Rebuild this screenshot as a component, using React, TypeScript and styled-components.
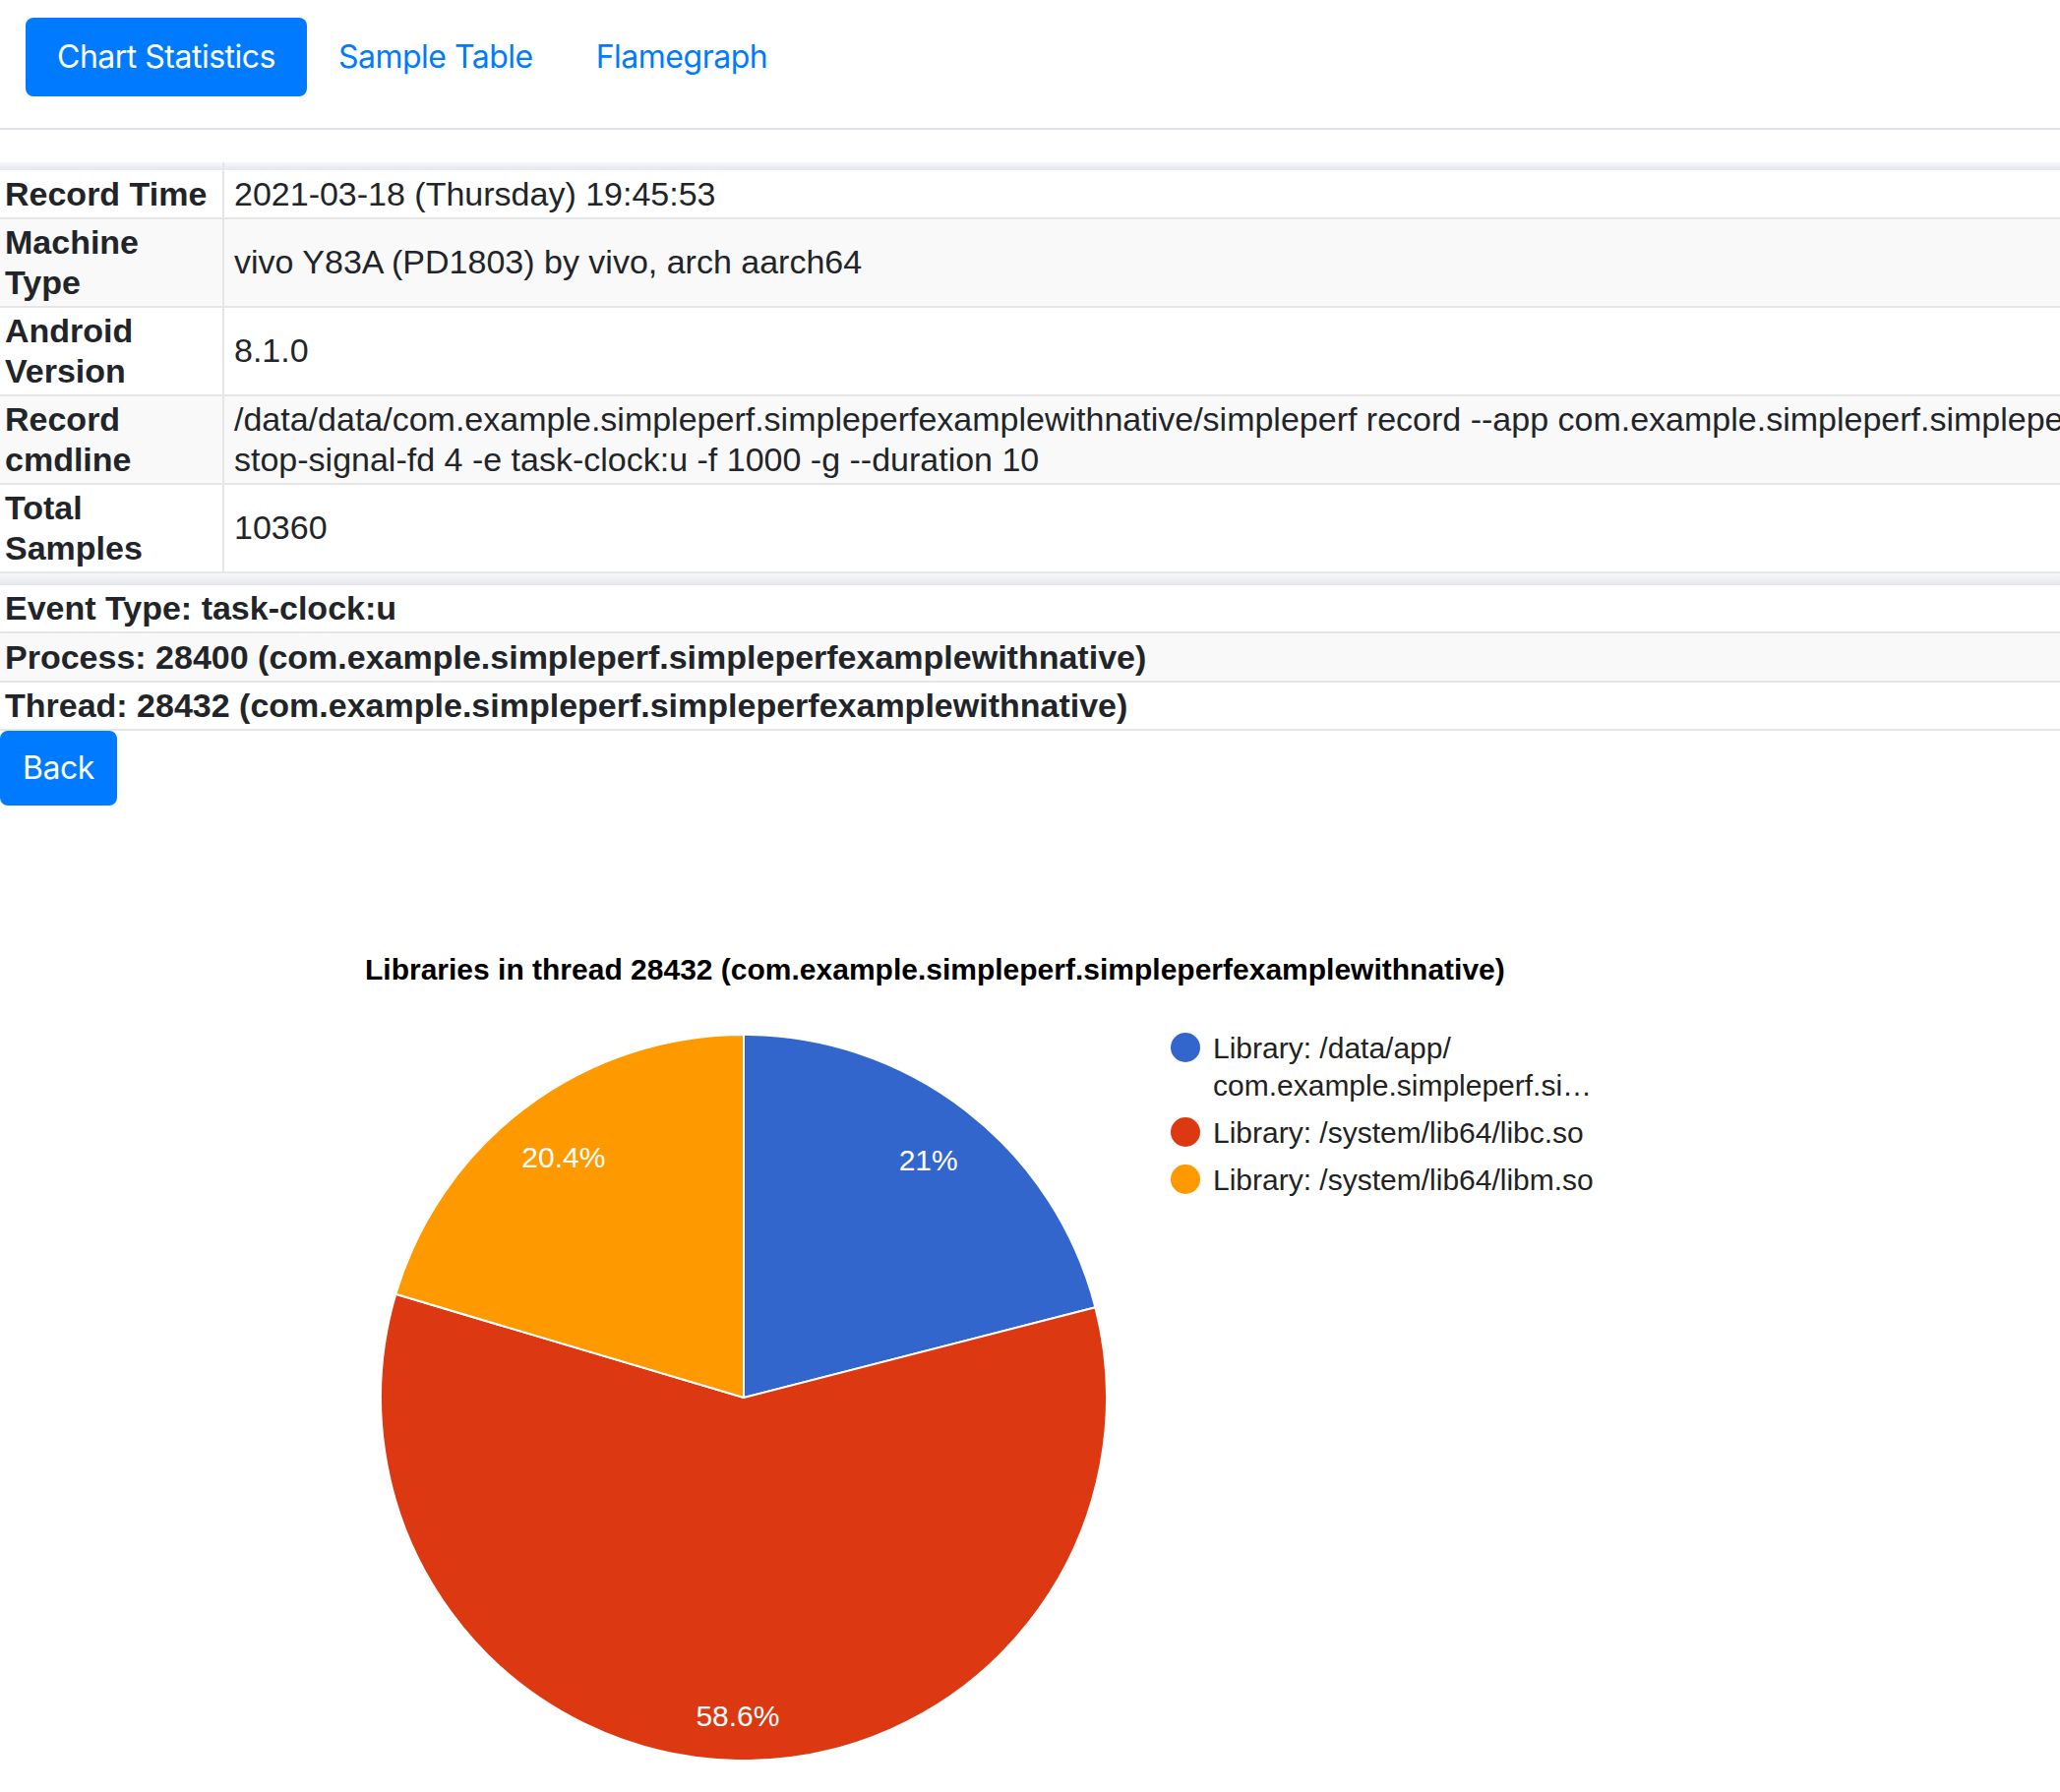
import * as React from 'react'
import styled, { createGlobalStyle } from 'styled-components'

const GlobalStyle = createGlobalStyle`
  body {
    margin: 0;
    background: #fff;
    font-family: "Liberation Sans", Arial, sans-serif;
    color: #212529;
  }
`

const Page = styled.div`
  width: 100%;
  overflow-x: hidden;
`

const Nav = styled.nav`
  display: flex;
  padding: 18px 0 32px 26px;
  border-bottom: 2px solid #dee2e6;
`

const NavLink = styled.a<{ $active?: boolean }>`
  display: block;
  padding: 16px 32px;
  font-family: Inter, "Noto Sans", sans-serif;
  font-size: 32px;
  line-height: 48px;
  letter-spacing: -0.5px;
  border-radius: 8px;
  text-decoration: none;
  cursor: pointer;
  color: ${p => (p.$active ? '#fff' : '#007bff')};
  background: ${p => (p.$active ? '#007bff' : 'transparent')};
`

const InfoTable = styled.table<{ $gap?: number }>`
  border-collapse: collapse;
  table-layout: fixed;
  width: 100%;
  margin-top: ${p => p.$gap || 0}px;
  font-size: 34px;
  color: #212529;
`

const Band = styled.th<{ $divider?: boolean; $tall?: boolean }>`
  height: ${p => (p.$tall ? 12 : 8)}px;
  padding: 0;
  background: linear-gradient(#f7f8fa, #e3e6eb);
  border-right: ${p => (p.$divider ? '2px solid #e6e6e6' : 'none')};
`

const Row = styled.tr`
  border-bottom: 2px solid #e6e6e6;
  &:nth-child(even) {
    background: #f9f9f9;
  }
`

const Key = styled.th`
  padding: 3.5px 0 3.5px 5px;
  text-align: left;
  vertical-align: middle;
  font-weight: 700;
  line-height: 40.5px;
  border-right: 2px solid #e6e6e6;
`

const Value = styled.td`
  padding: 3.5px 0 3.5px 10px;
  vertical-align: middle;
  line-height: 40.5px;
  white-space: nowrap;
`

const Heading = styled.td`
  padding: 3.5px 0 3.5px 5px;
  font-weight: 700;
  line-height: 40.5px;
  white-space: nowrap;
`

const BackButton = styled.button`
  display: block;
  margin: 0;
  padding: 12px 21px;
  font-family: Inter, "Noto Sans", sans-serif;
  font-size: 32px;
  line-height: 48px;
  letter-spacing: -0.5px;
  color: #fff;
  background: #007bff;
  border: 2px solid #007bff;
  border-radius: 8px;
  cursor: pointer;
`

const ChartBox = styled.div`
  height: 1003px;
`

const ChartSvg = styled.svg`
  display: block;
  font-family: "Liberation Sans", Arial, sans-serif;
`

const info: { key: string; value: React.ReactNode }[] = [
  { key: 'Record Time', value: '2021-03-18 (Thursday) 19:45:53' },
  { key: 'Machine Type', value: 'vivo Y83A (PD1803) by vivo, arch aarch64' },
  { key: 'Android Version', value: '8.1.0' },
  {
    key: 'Record cmdline',
    value: (
      <>
        /data/data/com.example.simpleperf.simpleperfexamplewithnative/simpleperf record --app
        com.example.simpleperf.simpleperfexamplewithnative --log info --log-to-android-buffer
        --out-fd 3 --
        <br />
        stop-signal-fd 4 -e task-clock:u -f 1000 -g --duration 10
      </>
    ),
  },
  { key: 'Total Samples', value: '10360' },
]

const headings = [
  'Event Type: task-clock:u',
  'Process: 28400 (com.example.simpleperf.simpleperfexamplewithnative)',
  'Thread: 28432 (com.example.simpleperf.simpleperfexamplewithnative)',
]

interface ISlice {
  legend: string[]
  pct: number
  color: string
  labelR: number
}

const slices: ISlice[] = [
  { legend: ['Library: /data/app/', 'com.example.simpleperf.si…'], pct: 21, color: '#3366cc', labelR: 0.83 },
  { legend: ['Library: /system/lib64/libc.so'], pct: 58.6, color: '#dc3912', labelR: 0.875 },
  { legend: ['Library: /system/lib64/libm.so'], pct: 20.4, color: '#ff9900', labelR: 0.83 },
]

const CX = 756
const CY = 602
const R = 369

const polar = (deg: number, r: number) => {
  const a = (deg * Math.PI) / 180
  return [CX + r * Math.sin(a), CY - r * Math.cos(a)]
}

const PieChart: React.FC = () => {
  let start = 0
  const parts = slices.map(s => {
    const sweep = (s.pct / 100) * 360
    const end = start + sweep
    const [x1, y1] = polar(start, R)
    const [x2, y2] = polar(end, R)
    const [lx, ly] = polar(start + sweep / 2, R * s.labelR)
    const d = `M${CX},${CY} L${x1},${y1} A${R},${R} 0 ${sweep > 180 ? 1 : 0} 1 ${x2},${y2} Z`
    start = end
    return { ...s, d, lx, ly }
  })

  let legendY = 257
  return (
    <ChartSvg width="100%" height={1003}>
      <text x={371} y={177} fontSize={30} fontWeight={700} fill="#000">
        Libraries in thread 28432 (com.example.simpleperf.simpleperfexamplewithnative)
      </text>
      {parts.map(p => (
        <path key={p.color} d={p.d} fill={p.color} stroke="#fff" strokeWidth={2} />
      ))}
      {parts.map(p => (
        <text key={p.color} x={p.lx} y={p.ly + 11} fontSize={30} fill="#fff" textAnchor="middle">
          {p.pct}%
        </text>
      ))}
      {parts.map(p => {
        const y = legendY
        legendY += 48 + (p.legend.length - 1) * 38
        return (
          <g key={p.color}>
            <circle cx={1205} cy={y - 11} r={15} fill={p.color} />
            <text x={1233} y={y} fontSize={30} fill="#222">
              {p.legend.map((line, i) => (
                <tspan key={i} x={1233} dy={i === 0 ? 0 : 38}>
                  {line}
                </tspan>
              ))}
            </text>
          </g>
        )
      })}
    </ChartSvg>
  )
}

const App: React.FC = () => {
  return (
    <Page>
      <GlobalStyle />
      <Nav>
        <NavLink $active>Chart Statistics</NavLink>
        <NavLink>Sample Table</NavLink>
        <NavLink>Flamegraph</NavLink>
      </Nav>
      <InfoTable $gap={33}>
        <colgroup>
          <col width={227} />
          <col />
        </colgroup>
        <thead>
          <tr>
            <Band $divider />
            <Band />
          </tr>
        </thead>
        <tbody>
          {info.map(item => (
            <Row key={item.key}>
              <Key>{item.key}</Key>
              <Value>{item.value}</Value>
            </Row>
          ))}
        </tbody>
      </InfoTable>
      <InfoTable>
        <thead>
          <tr>
            <Band $tall />
          </tr>
        </thead>
        <tbody>
          {headings.map(h => (
            <Row key={h}>
              <Heading>{h}</Heading>
            </Row>
          ))}
        </tbody>
      </InfoTable>
      <BackButton>Back</BackButton>
      <ChartBox>
        <PieChart />
      </ChartBox>
    </Page>
  )
}

export default App
